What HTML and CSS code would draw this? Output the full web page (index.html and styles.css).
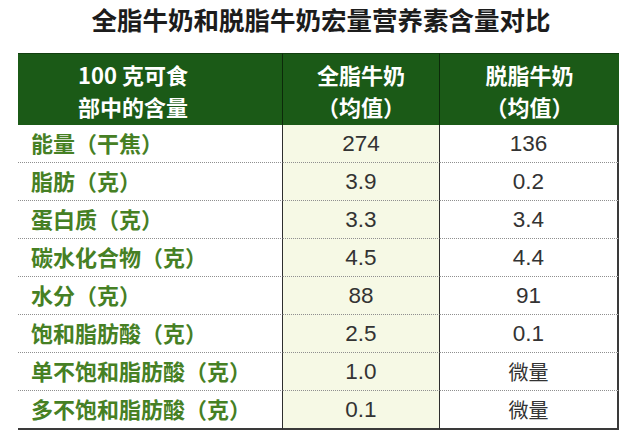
FILE: index.html
```html
<!DOCTYPE html>
<html lang="zh-CN">
<head>
<meta charset="utf-8">
<title>全脂牛奶和脱脂牛奶宏量营养素含量对比</title>
<link rel="stylesheet" href="styles.css">
</head>
<body>
<h1 class="title">全脂牛奶和脱脂牛奶宏量营养素含量对比</h1>
<table class="tbl">
  <thead>
    <tr>
      <th class="h h1"><span class="ln">100 克可食</span><span class="ln">部中的含量</span></th>
      <th class="h h2"><span class="ln">全脂牛奶</span><span class="ln">（均值）</span></th>
      <th class="h h3"><span class="ln">脱脂牛奶</span><span class="ln">（均值）</span></th>
    </tr>
  </thead>
  <tbody>
    <tr><td class="lab">能量（干焦）</td><td class="v full">274</td><td class="v skim">136</td></tr>
    <tr><td class="lab">脂肪（克）</td><td class="v full">3.9</td><td class="v skim">0.2</td></tr>
    <tr><td class="lab">蛋白质（克）</td><td class="v full">3.3</td><td class="v skim">3.4</td></tr>
    <tr><td class="lab">碳水化合物（克）</td><td class="v full">4.5</td><td class="v skim">4.4</td></tr>
    <tr><td class="lab">水分（克）</td><td class="v full">88</td><td class="v skim">91</td></tr>
    <tr><td class="lab">饱和脂肪酸（克）</td><td class="v full">2.5</td><td class="v skim">0.1</td></tr>
    <tr><td class="lab">单不饱和脂肪酸（克）</td><td class="v full">1.0</td><td class="v skim cjk">微量</td></tr>
    <tr class="last"><td class="lab">多不饱和脂肪酸（克）</td><td class="v full">0.1</td><td class="v skim cjk">微量</td></tr>
  </tbody>
</table>
</body>
</html>
```

FILE: styles.css
```css
html, body {
  margin: 0;
  padding: 0;
  background: #ffffff;
}

body {
  font-family: "Noto Sans CJK SC", "Noto Sans", sans-serif;
  width: 642px;
  height: 443px;
  overflow: hidden;
}

.title {
  margin: 0 0 16px 0;
  height: 37px;
  line-height: 37px;
  font-size: 25.5px;
  font-weight: 700;
  color: #1c1c1c;
  text-align: center;
}

.tbl {
  margin-left: 18px;
  width: 601px;
  border-spacing: 0;
  border-collapse: separate;
  table-layout: fixed;
}

.tbl th,
.tbl td {
  box-sizing: border-box;
  padding: 0;
}

.tbl .h {
  height: 72px;
  padding: 0;
  background: #1b5a17;
  color: #ffffff;
  font-size: 22px;
  font-weight: 700;
  line-height: 32px;
  text-align: center;
  vertical-align: middle;
  border-top: 1px solid #123f10;
}

.ln {
  display: block;
  height: 32px;
  white-space: nowrap;
}

.tbl .h1 {
  width: 265px;
  text-align: left;
  padding-left: 60px;
  border-right: 1px solid #0c2a0a;
}

.tbl .h2 {
  width: 157px;
  border-right: 1px solid #0c2a0a;
}

.tbl .h3 {
  width: 179px;
}

.tbl td {
  height: 38px;
  border-bottom: 1px dotted #8f8f8f;
  vertical-align: middle;
}

.tbl tr.last td {
  height: 39px;
  border-bottom: 2px solid #3a3a3a;
}

.tbl .lab {
  padding-left: 13px;
  padding-bottom: 3px;
  color: #468024;
  font-size: 22px;
  font-weight: 700;
  border-right: 1px solid #2e2e2e;
  white-space: nowrap;
}

.v {
  text-align: center;
  font-family: "Liberation Sans", "Noto Sans CJK SC", sans-serif;
  font-size: 22.5px;
  color: #333333;
}

.full {
  background: #f6f9e5;
  border-right: 1px solid #2e2e2e;
}

.skim {
  background: #ffffff;
  border-right: 2px solid #3a3a3a;
}

.v.cjk {
  font-family: "Noto Sans CJK SC", sans-serif;
  font-size: 20px;
}
```
